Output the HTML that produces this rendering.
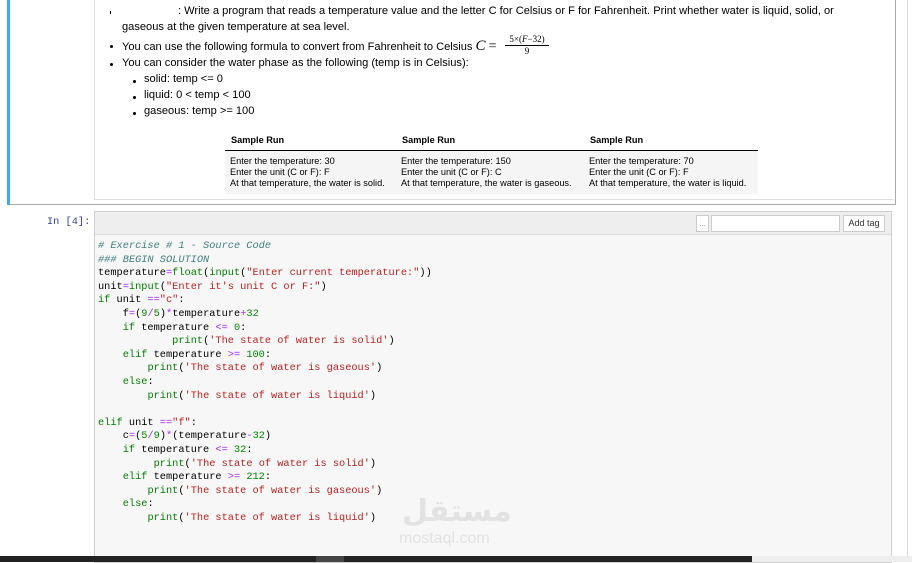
<!DOCTYPE html>
<html><head><meta charset="utf-8"><style>
body{margin:0;width:912px;height:562px;overflow:hidden;background:#fff;font-family:"Liberation Sans",sans-serif;position:relative}
.abs{position:absolute}
.t{font-size:11.1px;color:#000;white-space:nowrap}
.bul{width:3px;height:3px;background:#000;border-radius:50%}
.code{font-family:"Liberation Mono",monospace;font-size:10.3px;color:#000;white-space:pre;line-height:13.6px}
.cm{color:#408080;font-style:italic}.kw{color:#008000}.bi{color:#008000}.st{color:#ba2121}.op{color:#aa22ff}.nu{color:#080}
.sr{font-size:9.2px;white-space:nowrap}
</style></head><body>
<div class="abs" style="left:7px;top:0;width:3px;height:205px;background:#42a5f5"></div>
<div class="abs" style="left:10px;top:0;width:885px;height:204px;border-right:1px solid #ababab;border-bottom:1px solid #ababab"></div>
<div class="abs" style="left:94px;top:0;width:1px;height:200px;background:#e0e0e0"></div>
<div class="abs" style="left:94px;top:199px;width:800px;height:1px;background:#e0e0e0"></div>
<div class="abs" style="left:110px;top:11px;width:1px;height:3px;background:#000"></div>
<div class="abs t" style="left:178px;top:5px">: Write a program that reads a temperature value and the letter C for Celsius or F for Fahrenheit. Print whether water is liquid, solid, or</div>
<div class="abs t" style="left:122px;top:21px">gaseous at the given temperature at sea level.</div>
<div class="abs bul" style="left:110px;top:45px"></div>
<div class="abs t" style="left:122px;top:38px">You can use the following formula to convert from Fahrenheit to Celsius <span style="font-family:'Liberation Serif',serif;font-style:italic;font-size:15px">C</span> <span style="font-family:'Liberation Serif',serif;font-size:14px">=</span></div>
<div class="abs" style="left:505px;top:34px;font-family:'Liberation Serif',serif;font-size:9px;text-align:center;width:44px;line-height:10px">5×(<i>F</i>−32)<div style="border-top:1px solid #000;margin-top:1px">9</div></div>
<div class="abs bul" style="left:110px;top:63px"></div>
<div class="abs t" style="left:122px;top:57px">You can consider the water phase as the following (temp is in Celsius):</div>
<div class="abs bul" style="left:133px;top:80px"></div>
<div class="abs t" style="left:144px;top:73px">solid: temp &lt;= 0</div>
<div class="abs bul" style="left:133px;top:96px"></div>
<div class="abs t" style="left:144px;top:89px">liquid: 0 &lt; temp &lt; 100</div>
<div class="abs bul" style="left:133px;top:112px"></div>
<div class="abs t" style="left:144px;top:105px">gaseous: temp &gt;= 100</div>
<div class="abs" style="left:225px;top:150px;width:533px;height:1px;background:#000"></div>
<div class="abs" style="left:225px;top:151px;width:533px;height:43px;background:#f5f5f5"></div>
<div class="abs sr" style="left:231px;top:135px;font-weight:bold">Sample Run</div>
<div class="abs sr" style="left:402px;top:135px;font-weight:bold">Sample Run</div>
<div class="abs sr" style="left:590px;top:135px;font-weight:bold">Sample Run</div>
<div class="abs sr" style="left:230px;top:156px;line-height:11px">Enter the temperature: 30<br>Enter the unit (C or F): F<br>At that temperature, the water is solid.</div>
<div class="abs sr" style="left:401px;top:156px;line-height:11px">Enter the temperature: 150<br>Enter the unit (C or F): C<br>At that temperature, the water is gaseous.</div>
<div class="abs sr" style="left:589px;top:156px;line-height:11px">Enter the temperature: 70<br>Enter the unit (C or F): F<br>At that temperature, the water is liquid.</div>
<div class="abs code" style="left:47px;top:216px;color:#303f9f">In [4]:</div>
<div class="abs" style="left:94px;top:211px;width:796px;height:350px;border:1px solid #cfcfcf;background:#f7f7f7"></div>
<div class="abs" style="left:95px;top:212px;width:796px;height:22px;background:#eee;border-bottom:1px solid #ddd"></div>
<div class="abs" style="left:696px;top:215px;width:11px;height:15px;border:1px solid #ccc;background:#fff;font-size:7px;color:#666;text-align:center;line-height:18px">...</div>
<div class="abs" style="left:711px;top:215px;width:127px;height:15px;border:1px solid #ccc;background:#fff"></div>
<div class="abs" style="left:843px;top:215px;width:40px;height:15px;border:1px solid #ccc;background:#fff;font-size:9px;color:#333;text-align:center;line-height:15px">Add tag</div>
<div class="abs code" style="left:98px;top:240px"><span class="cm"># Exercise # 1 - Source Code</span>
<span class="cm">### BEGIN SOLUTION</span>
temperature<span class="op">=</span><span class="bi">float</span>(<span class="bi">input</span>(<span class="st">"Enter current temperature:"</span>))
unit<span class="op">=</span><span class="bi">input</span>(<span class="st">"Enter it's unit C or F:"</span>)
<span class="kw">if</span> unit <span class="op">==</span><span class="st">"c"</span>:
    f<span class="op">=</span>(<span class="nu">9</span><span class="op">/</span><span class="nu">5</span>)<span class="op">*</span>temperature<span class="op">+</span><span class="nu">32</span>
    <span class="kw">if</span> temperature <span class="op">&lt;=</span> <span class="nu">0</span>:
            <span class="bi">print</span>(<span class="st">'The state of water is solid'</span>)
    <span class="kw">elif</span> temperature <span class="op">&gt;=</span> <span class="nu">100</span>:
        <span class="bi">print</span>(<span class="st">'The state of water is gaseous'</span>)
    <span class="kw">else</span>:
        <span class="bi">print</span>(<span class="st">'The state of water is liquid'</span>)

<span class="kw">elif</span> unit <span class="op">==</span><span class="st">"f"</span>:
    c<span class="op">=</span>(<span class="nu">5</span><span class="op">/</span><span class="nu">9</span>)<span class="op">*</span>(temperature<span class="op">-</span><span class="nu">32</span>)
    <span class="kw">if</span> temperature <span class="op">&lt;=</span> <span class="nu">32</span>:
         <span class="bi">print</span>(<span class="st">'The state of water is solid'</span>)
    <span class="kw">elif</span> temperature <span class="op">&gt;=</span> <span class="nu">212</span>:
        <span class="bi">print</span>(<span class="st">'The state of water is gaseous'</span>)
    <span class="kw">else</span>:
        <span class="bi">print</span>(<span class="st">'The state of water is liquid'</span>)</div>
<div class="abs" style="left:402px;top:494px;font-size:30px;font-weight:bold;color:#e2e2e2;font-family:'DejaVu Sans',sans-serif">مستقل</div>
<div class="abs" style="left:399px;top:530px;font-size:16px;color:#e2e2e2">mostaql.com</div>
<div class="abs" style="left:907px;top:0;width:1px;height:556px;background:#ddd"></div>
<div class="abs" style="left:0;top:556px;width:752px;height:6px;background:#222"></div>
<div class="abs" style="left:316px;top:556px;width:28px;height:6px;background:#444"></div>
<div class="abs" style="left:752px;top:556px;width:160px;height:6px;background:#eee"></div>
</body></html>
